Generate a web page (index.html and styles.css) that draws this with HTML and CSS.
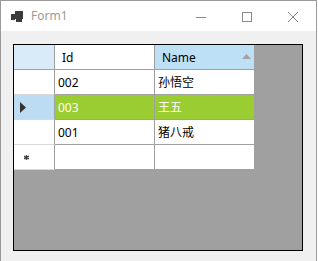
FILE: index.html
```html
<!DOCTYPE html>
<html>
<head>
<meta charset="utf-8">
<link rel="stylesheet" href="styles.css">
</head>
<body>
<div class="window">
  <div class="titlebar">
    <svg class="app-icon" width="12" height="11" viewBox="0 0 12 11">
      <rect x="0" y="3" width="4" height="6" fill="#3c3c3c"/>
      <rect x="4" y="0" width="8" height="8" fill="#3c3c3c"/>
      <rect x="5" y="8" width="6" height="3" fill="#3c3c3c"/>
    </svg>
    <span class="title">Form1</span>
    <div class="controls">
      <svg class="ctl" width="46" height="30" viewBox="0 0 46 30"><line x1="18" y1="16.5" x2="28" y2="16.5" stroke="#8a8a8a" stroke-width="1"/></svg>
      <svg class="ctl" width="46" height="30" viewBox="0 0 46 30"><rect x="18.5" y="11.5" width="9" height="9" fill="none" stroke="#8a8a8a" stroke-width="1"/></svg>
      <svg class="ctl" width="46" height="30" viewBox="0 0 46 30"><path d="M18 11 L28 21 M28 11 L18 21" stroke="#8a8a8a" stroke-width="1"/></svg>
    </div>
  </div>
  <div class="client">
    <div class="gridview">
      <div class="table">
        <div class="cell corner"></div>
        <div class="cell colhead">Id</div>
        <div class="cell colhead sorted"><span>Name</span><svg class="sort" width="9" height="5" viewBox="0 0 9 5"><path d="M0 5 L9 5 L4.5 0 Z" fill="#a3a3a3"/></svg></div>

        <div class="cell rowhead"></div>
        <div class="cell">002</div>
        <div class="cell">孙悟空</div>

        <div class="cell rowhead current"><svg class="arrow" width="6" height="11" viewBox="0 0 6 11"><path d="M0 0 L6 5.5 L0 11 Z" fill="#333"/></svg></div>
        <div class="cell sel">003</div>
        <div class="cell sel">王五</div>

        <div class="cell rowhead"></div>
        <div class="cell">001</div>
        <div class="cell">猪八戒</div>

        <div class="cell rowhead newrow"><svg class="star" width="5" height="5" viewBox="0 0 5 5"><path d="M2.5 0 V5 M0 1.2 L5 3.8 M0 3.8 L5 1.2" stroke="#444" stroke-width="1.3"/></svg></div>
        <div class="cell"></div>
        <div class="cell"></div>
      </div>
    </div>
  </div>
</div>
</body>
</html>
```

FILE: styles.css
```css
html, body {
  margin: 0;
  padding: 0;
  background: #ffffff;
}

.window {
  width: 317px;
  height: 261px;
  box-sizing: border-box;
  border: 1px solid #9a9a9a;
  border-bottom: none;
  background: #f0f0f0;
  display: flex;
  flex-direction: column;
  font-family: "Noto Sans", "Noto Sans CJK SC", sans-serif;
}

.titlebar {
  height: 30px;
  background: #ffffff;
  display: flex;
  align-items: center;
  flex-shrink: 0;
}

.app-icon {
  margin-left: 10px;
  margin-top: 1px;
}

.title {
  margin-left: 8px;
  font-family: "Noto Sans", sans-serif;
  font-size: 12px;
  color: #9a9a9a;
  line-height: 30px;
}

.controls {
  margin-left: auto;
  display: flex;
  margin-right: 0;
}

.ctl {
  display: block;
}

.client {
  flex: 1;
  padding: 13px 0 0 12px;
}

.gridview {
  width: 290px;
  height: 207px;
  box-sizing: border-box;
  border: 1px solid #000;
  background: #a0a0a0;
}

.table {
  display: grid;
  grid-template-columns: 41px 100px 100px;
  grid-auto-rows: 25px;
  width: 241px;
}

.cell {
  box-sizing: border-box;
  border-right: 1px solid #a0a0a0;
  border-bottom: 1px solid #a0a0a0;
  background: #ffffff;
  font-size: 12px;
  color: #000;
  display: flex;
  align-items: center;
  padding-left: 3px;
  white-space: nowrap;
}

.corner {
  background: #d9eaf8;
}

.colhead {
  padding-left: 7px;
}

.colhead.sorted {
  background: #bee0f7;
  padding-right: 3px;
}

.sort {
  margin-left: auto;
  margin-top: -1px;
}

.rowhead {
  border-bottom-color: #d8d8d8;
  padding-left: 6px;
}

.rowhead.current {
  background: #bcdcf4;
}

.arrow {
  margin-top: 1px;
}

.newrow .star {
  margin-left: 4px;
}

.sel {
  background: #9acd32;
  color: #ffffff;
}
```
